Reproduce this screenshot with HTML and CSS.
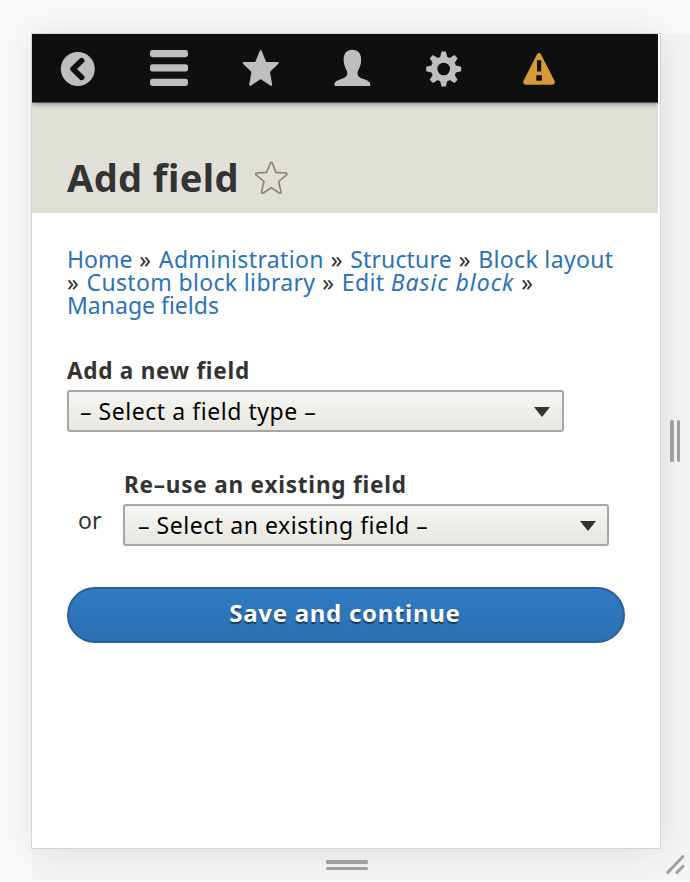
FILE: index.html
```
<!DOCTYPE html>
<html lang="en">
	<head>
		<meta charset="UTF-8">
		<title>Add field</title>
		<link rel="stylesheet" href="styles.css">
	</head>
	<body>
		<div class="preview">
			<div class="frame">
				<!-- toolbar -->
				<nav class="toolbar">
					<a class="tab" title="Back">
						<svg viewBox="0 0 40 40"><circle cx="19.8" cy="21" r="17"/><path class="cut-line" d="M23.7 12.6L15 21l8.7 8.4"/></svg>
					</a>
					<a class="tab" title="Menu">
						<svg viewBox="0 0 40 40"><rect x="1" y="2" width="38" height="7.2" rx="2.4"/><rect x="1" y="16.2" width="38" height="7.4" rx="2.4"/><rect x="1" y="30.8" width="38" height="7.2" rx="2.4"/></svg>
					</a>
					<a class="tab" title="Shortcuts">
						<svg viewBox="0 0 40 40"><path class="round" d="M19.7 3.2L24.3 14.7 36.7 15.1 27.9 23.4 30.2 36.8 19.7 30 9.2 36.8 11.5 23.4 2.7 15.1 15.1 14.7z"/></svg>
					</a>
					<a class="tab" title="User">
						<svg viewBox="0 0 40 40"><path d="M19.4 1.8C14 1.8 10.6 5.5 10.6 11.5c0 5 1.7 8.5 3.4 12 1 3.2-.4 5.3-3.6 6.7-3.8 1.5-9 2.5-9 6.5 0 .8.4 1.3 1.2 1.3h33.600c.8 0 1.2-.5 1.2-1.3 0-4-5.200-5-9-6.500-3.200-1.400-4.600-3.500-3.600-6.700 1.700-3.500 3.400-7 3.400-12C28.200 5.500 24.800 1.800 19.400 1.800z"/></svg>
					</a>
					<a class="tab" title="Configuration">
						<svg viewBox="-19.7 -21 40 40">
							<circle r="12.6"/>
							<path id="teeth" d="M-2.2-17.5h4.4L4-10V10L2.2 17.5h-4.4L-4 10V-10z"/>
							<use href="#teeth" transform="rotate(45)"/>
							<use href="#teeth" transform="rotate(90)"/>
							<use href="#teeth" transform="rotate(135)"/>
							<circle class="cut" r="6.3"/>
						</svg>
					</a>
					<a class="tab tab-warning" title="Warning">
						<svg viewBox="0 0 40 40"><path class="round" d="M18.9 6.8L5.3 33.5Q4.8 35.7 7 35.7H33Q35.2 35.7 34.7 33.500L21.100 6.800Q20 5.200 18.900 6.800z"/><path class="cut" d="M18 12.2h4.200v11.200h-4.200zM17.300 27.200h5.600v5.600h-5.600z"/></svg>
					</a>
				</nav>

				<header class="header">
					<h1>Add field</h1>
					<svg class="star" viewBox="0 0 34 34"><path d="M15.3 2.2Q16.3 .4 17.3 2.2L21 11.4 30.8 12Q32.9 12.700 31.300 14.200L23.600 20.500 26 30.900Q26 32.900 24.200 32L16.300 26.600 8.400 32Q6.600 32.900 6.600 30.900L9 20.500 1.300 14.200Q-.3 12.700 1.800 12L11.600 11.400z"/></svg>
				</header>

				<main class="content">
					<ol class="breadcrumb">
						<li><a>Home</a></li>
						<li><a>Administration</a></li>
						<li><a>Structure</a></li>
						<li><a>Block layout</a></li>
						<li><a>Custom block library</a></li>
						<li><a>Edit <em>Basic block</em></a></li>
						<li><a>Manage fields</a></li>
					</ol>

					<div class="form-item new-field">
						<div class="label">Add a new field</div>
						<div class="select"><span>– Select a field type –</span><i class="arrow"></i></div>
					</div>

					<div class="form-row">
						<span class="or">or</span>
						<div class="form-item reuse-field">
							<div class="label">Re–use an existing field</div>
							<div class="select"><span>– Select an existing field –</span><i class="arrow"></i></div>
						</div>
					</div>

					<div class="button"><span>Save and continue</span></div>
				</main>
			</div>

			<!-- resize handles -->
			<div class="handle-right"><i></i><i></i></div>
			<div class="handle-bottom"><i></i><i></i></div>
			<div class="handle-corner">
				<svg viewBox="0 0 20 22"><path d="M2.7 18.5L18 2.5M12 18.5l6-6.2"/></svg>
			</div>
		</div>
	</body>
</html>
```

FILE: styles.css
```
*{
	margin: 0;
	padding: 0;
	box-sizing: border-box;
}

body{
	background: #fafafa;
	color: #333;
	font-family: "Noto Sans", "Open Sans", sans-serif;
	font-size: 23px;
	line-height: 23px;
	overflow: hidden;
}

/* frame + handles */
.preview{
	display: grid;
	grid-template-columns: 630px 29px;
	grid-template-rows: 816px 31px;
	padding: 33px 0 2px 31px;
}

.frame{
	position: relative;
	z-index: 1;
	background: #fff;
	border: 1px solid #d4d5d6;
	box-shadow: 0 0 36px rgba(0,0,0,0.1);
}

.handle-right,
.handle-bottom,
.handle-corner{
	display: flex;
	background: #f4f4f4;
}

.handle-right{
	align-items: center;
	gap: 3px;
	padding: 0 0 2px 9px;
	margin-top: 1px;
}

.handle-bottom{
	flex-direction: column;
	align-items: center;
	gap: 3px;
	padding-top: 11px;
	margin-left: 1px;
}

.handle-right i,
.handle-bottom i{
	position: relative;
	z-index: 2;
	background: #9f9f9f;
	border-radius: 1.5px;
}

.handle-right i{
	width: 3.5px;
	height: 42px;
}

.handle-bottom i{
	width: 42px;
	height: 3.5px;
}

.handle-corner{
	padding: 5px 0 0 4px;
}

.handle-corner svg{
	position: relative;
	z-index: 2;
	width: 20px;
	height: 22px;
	fill: none;
	stroke: #9f9f9f;
	stroke-width: 3;
	stroke-linecap: round;
}

/* toolbar */
.toolbar{
	position: relative;
	display: flex;
	width: 626px;
	height: 68px;
	background: #0f0f0f;
	box-shadow: 0 1px 0 #53534f, 0 2px 5px rgba(0,0,0,0.4);
	clip-path: inset(0 0 -10px 0);
}

.tab{
	display: flex;
	align-items: center;
	justify-content: center;
	width: 91.6px;
	height: 68px;
}

.tab svg{
	width: 40px;
	height: 40px;
	fill: #bebebe;
}

.tab .cut{
	fill: #0f0f0f;
}

.tab .cut-line{
	fill: none;
	stroke: #0f0f0f;
	stroke-width: 5.6;
	stroke-linejoin: round;
	stroke-linecap: round;
}

.round{
	stroke: #bebebe;
	stroke-width: 2;
	stroke-linejoin: round;
}

.tab-warning{
	margin-left: 3px;
}

.tab-warning svg{
	fill: #d89a35;
}

.tab-warning .round{
	stroke: #d89a35;
}

/* page header */
.header{
	display: flex;
	align-items: flex-start;
	width: 626px;
	height: 111px;
	padding: 55px 0 0 35px;
	background: #e0e0d8;
}

.header h1{
	width: 186px;
	font-size: 38px;
	line-height: 40px;
	letter-spacing: 0.4px;
	white-space: nowrap;
}

.star{
	width: 34px;
	height: 34px;
	margin: 4px 0 0 2px;
	fill: none;
	stroke: #85836b;
	stroke-width: 1.6;
	stroke-linejoin: round;
}

.content{
	padding: 35px 35px 0 35px;
}

/* breadcrumb */
.breadcrumb{
	width: 550px;
	list-style: none;
	letter-spacing: 0.9px;
}

.breadcrumb li{
	display: inline;
}

.breadcrumb li + li::before{
	content: "» ";
}

.breadcrumb a{
	color: #2b72b8;
	letter-spacing: 0.35px;
}

.breadcrumb li:first-child a,
.breadcrumb li:last-child a{
	letter-spacing: 0;
}

.breadcrumb li:nth-child(3) a{
	letter-spacing: 0.15px;
}

.breadcrumb em{
	letter-spacing: 0.95px;
}

/* form */
.label{
	height: 31px;
	font-size: 22.5px;
	font-weight: bold;
	letter-spacing: 0.75px;
	white-space: nowrap;
}

.new-field{
	width: 497px;
	margin-top: 42px;
}

.select{
	display: flex;
	align-items: center;
	justify-content: space-between;
	height: 42px;
	padding: 0 12px 0 11px;
	border: 2px solid #a6a6a6;
	border-radius: 3px;
	background: linear-gradient(#f6f6f3, #e7e7df);
	color: #000;
	letter-spacing: 0.55px;
	text-shadow: 0 1px 1px rgba(255,255,255,0.6);
	white-space: nowrap;
}

.arrow{
	border: 8px solid transparent;
	border-top: 10px solid #333;
	border-bottom: 0;
	margin-top: 2px;
}

.form-row{
	display: flex;
	margin-top: 41px;
}

.or{
	width: 56px;
	padding: 36px 0 0 11px;
}

.reuse-field{
	width: 486px;
}

.reuse-field .label{
	padding-left: 1px;
	letter-spacing: 0.8px;
}

.reuse-field .select{
	padding: 0 11px 0 13px;
}

.button{
	display: flex;
	align-items: center;
	justify-content: center;
	height: 56px;
	margin-top: 41px;
	padding: 0 2px 5px 0;
	border: 2px solid #2a5f97;
	border-radius: 29px;
	background: linear-gradient(#307bc1, #2b6fb4);
	color: #fff;
	font-size: 24px;
	font-weight: bold;
	letter-spacing: 0.7px;
	text-shadow: 0 2px 1px rgba(0,0,0,0.5);
}
```
